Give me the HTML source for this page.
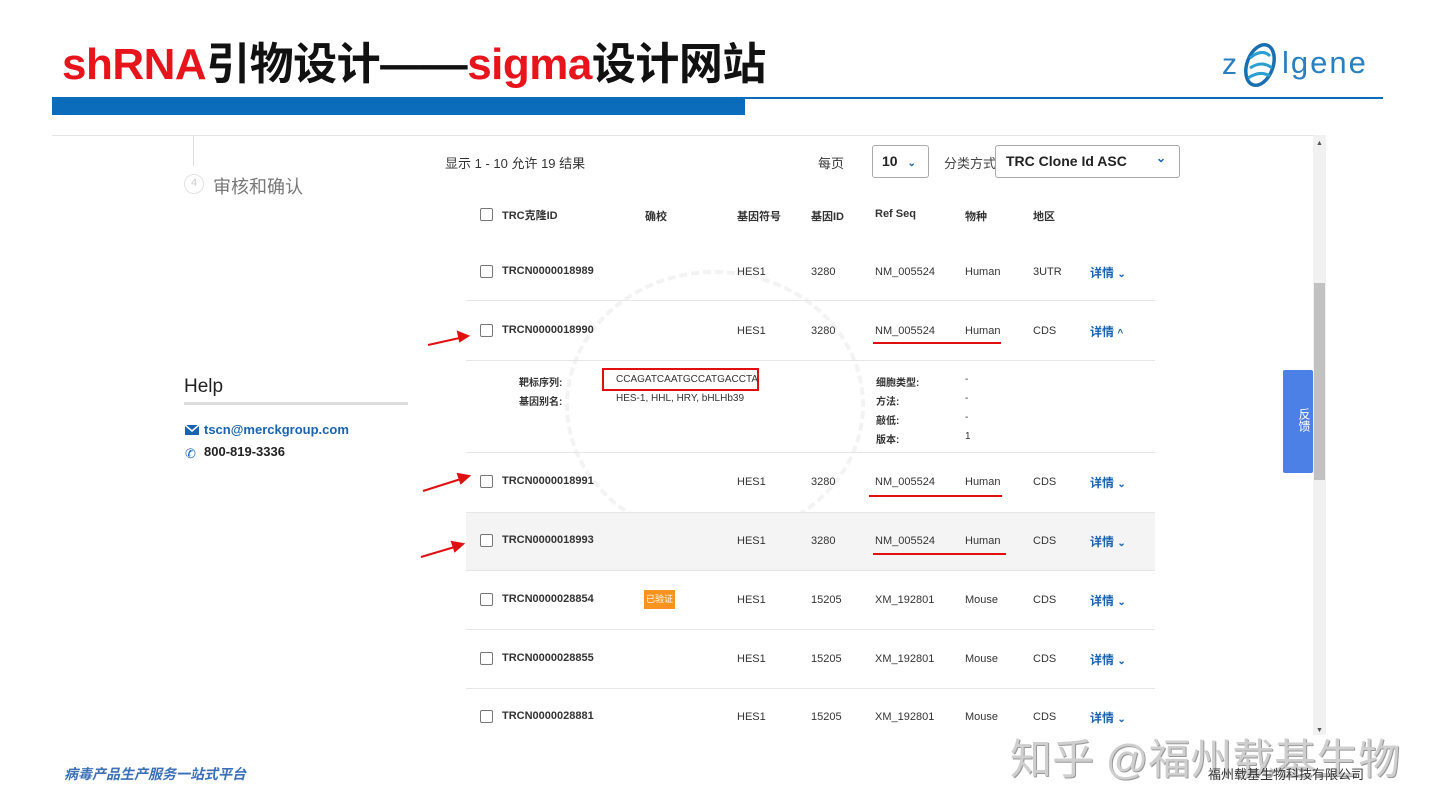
<!DOCTYPE html>
<html><head><meta charset="utf-8"><style>
*{margin:0;padding:0;box-sizing:border-box}
body{width:1440px;height:810px;background:#fff;position:relative;overflow:hidden;font-family:"Liberation Sans","Noto Sans CJK SC",sans-serif;color:#222}
.a{position:absolute;white-space:nowrap}
.t{font-size:11px;color:#333}
.b{font-weight:bold}
.cb{position:absolute;width:13px;height:13px;border:1.5px solid #777;border-radius:2px;background:#fff}
.ln{position:absolute;left:466px;width:689px;height:1px;background:#e6e6e6}
.det{color:#1a63b0;font-weight:bold;font-size:12px}
.red{position:absolute;height:2px;background:#e01010}
</style></head><body>
<div class="a" style="left:565px;top:270px;width:300px;height:270px;border:4px dashed #f3f3f3;border-radius:50%"></div>
<div class="a b" style="left:62px;top:38px;font-size:44px;letter-spacing:-0.5px;line-height:54px"><span style="color:#e8141c">shRNA</span><span style="color:#111">引物设计——</span><span style="color:#e8141c">sigma</span><span style="color:#111">设计网站</span></div>
<div class="a" style="left:1222px;top:47px;font-size:30px;color:#2a7fc1;line-height:36px">z</div>
<div class="a" style="left:1282px;top:45px;font-size:31px;color:#2a7fc1;letter-spacing:2px;line-height:36px">lgene</div>
<svg class="a" style="left:1240px;top:40px" width="44" height="50" viewBox="0 0 44 50"><ellipse cx="20" cy="25" rx="13" ry="21" fill="none" stroke="#1a6fb0" stroke-width="3.5" transform="rotate(20 20 25)"/><path d="M10 18 Q22 8 30 16 M10 28 Q22 20 32 28 M8 38 Q20 30 30 36" fill="none" stroke="#2a9fd0" stroke-width="3"/></svg>
<div class="a" style="left:52px;top:97px;width:693px;height:18px;background:#0a6cbb"></div>
<div class="a" style="left:745px;top:97px;width:638px;height:2px;background:#0a6cbb"></div>
<div class="a" style="left:52px;top:135px;width:1274px;height:1px;background:#e5e5e5"></div>
<div class="a" style="left:1313px;top:135px;width:13px;height:600px;background:#f1f1f1"></div>
<div class="a" style="left:1314px;top:283px;width:11px;height:197px;background:#c1c1c1"></div>
<div class="a" style="left:1316px;top:140px;font-size:7px;color:#555">▲</div>
<div class="a" style="left:1316px;top:727px;font-size:7px;color:#555">▼</div>
<div class="a" style="left:193px;top:136px;width:1px;height:30px;background:#ddd"></div>
<div class="a" style="left:184px;top:174px;width:20px;height:20px;border:1.5px solid #e2e2e2;border-radius:50%;font-size:11px;color:#ccc;text-align:center;line-height:17px">4</div>
<div class="a" style="left:213px;top:173px;font-size:18px;color:#777">审核和确认</div>
<div class="a" style="left:184px;top:376px;font-size:19px;color:#222">Help</div>
<div class="a" style="left:184px;top:402px;width:224px;height:3px;background:#ddd"></div>
<div class="a" style="left:185px;top:425px;width:14px;height:10px;background:#1a63b0"></div>
<svg class="a" style="left:185px;top:425px" width="14" height="10"><path d="M0 0 L7 6 L14 0" fill="none" stroke="#fff" stroke-width="1.5"/></svg>
<div class="a b" style="left:204px;top:422px;font-size:13px;color:#1a63b0">tscn@merckgroup.com</div>
<div class="a" style="left:185px;top:446px;font-size:13px;color:#1a63b0">✆</div>
<div class="a b" style="left:204px;top:444px;font-size:13px;color:#222">800-819-3336</div>
<div class="a" style="left:445px;top:153px;font-size:13px;color:#333">显示 1 - 10 允许 19 结果</div>
<div class="a" style="left:818px;top:153px;font-size:13px;color:#333">每页</div>
<div class="a" style="left:872px;top:145px;width:57px;height:33px;border:1px solid #aaa;border-radius:3px;font-size:14px;font-weight:bold;padding:7px 0 0 9px">10 <span style="color:#1a63b0;font-size:10px;margin-left:6px">⌄</span></div>
<div class="a" style="left:944px;top:153px;font-size:13px;color:#444">分类方式</div>
<div class="a" style="left:995px;top:145px;width:185px;height:33px;border:1px solid #aaa;border-radius:3px;font-size:14px;font-weight:bold;padding:7px 0 0 10px">TRC Clone Id ASC<span style="position:absolute;left:160px;top:5px;color:#1a63b0;font-size:12px">⌄</span></div>

<div class="cb" style="left:480px;top:208px"></div>
<div class="a t b" style="left:502px;top:207px">TRC克隆ID</div>
<div class="a t b" style="left:645px;top:208px">确校</div>
<div class="a t b" style="left:737px;top:208px">基因符号</div>
<div class="a t b" style="left:811px;top:208px">基因ID</div>
<div class="a t b" style="left:875px;top:208px">Ref Seq</div>
<div class="a t b" style="left:965px;top:208px">物种</div>
<div class="a t b" style="left:1033px;top:208px">地区</div>

<div class="ln" style="top:300px"></div><div class="ln" style="top:360px"></div><div class="ln" style="top:452px"></div><div class="ln" style="top:512px"></div><div class="ln" style="top:570px"></div><div class="ln" style="top:629px"></div><div class="ln" style="top:688px"></div>
<div class="a" style="left:466px;top:513px;width:689px;height:57px;background:#f4f4f4"></div>

<div class="cb" style="left:480px;top:265px"></div><div class="a t b" style="left:502px;top:265px">TRCN0000018989</div><div class="a t" style="left:737px;top:266px">HES1</div><div class="a t" style="left:811px;top:266px">3280</div><div class="a t" style="left:875px;top:266px">NM_005524</div><div class="a t" style="left:965px;top:266px">Human</div><div class="a t" style="left:1033px;top:266px">3UTR</div><div class="a det" style="left:1090px;top:264px">详情 <span style="font-size:10px">⌄</span></div>

<div class="cb" style="left:480px;top:324px"></div><div class="a t b" style="left:502px;top:324px">TRCN0000018990</div><div class="a t" style="left:737px;top:325px">HES1</div><div class="a t" style="left:811px;top:325px">3280</div><div class="a t" style="left:875px;top:325px">NM_005524</div><div class="a t" style="left:965px;top:325px">Human</div><div class="a t" style="left:1033px;top:325px">CDS</div><div class="a det" style="left:1090px;top:323px">详情 <span style="font-size:10px">^</span></div>
<div class="red" style="left:873px;top:342px;width:128px"></div>

<div class="a t b" style="left:519px;top:374px;font-size:10px">靶标序列:</div>
<div class="a t b" style="left:519px;top:393px;font-size:10px">基因别名:</div>
<div class="a" style="left:602px;top:368px;width:157px;height:23px;border:2px solid #e01010"></div>
<div class="a t" style="left:616px;top:374px;font-size:10px">CCAGATCAATGCCATGACCTA</div>
<div class="a t" style="left:616px;top:393px;font-size:10px">HES-1, HHL, HRY, bHLHb39</div>
<div class="a t b" style="left:876px;top:374px;font-size:10px">细胞类型:</div>
<div class="a t b" style="left:876px;top:393px;font-size:10px">方法:</div>
<div class="a t b" style="left:876px;top:412px;font-size:10px">敲低:</div>
<div class="a t b" style="left:876px;top:431px;font-size:10px">版本:</div>
<div class="a t" style="left:965px;top:374px;font-size:10px">-</div><div class="a t" style="left:965px;top:393px;font-size:10px">-</div><div class="a t" style="left:965px;top:412px;font-size:10px">-</div><div class="a t" style="left:965px;top:431px;font-size:10px">1</div>

<div class="cb" style="left:480px;top:475px"></div><div class="a t b" style="left:502px;top:475px">TRCN0000018991</div><div class="a t" style="left:737px;top:476px">HES1</div><div class="a t" style="left:811px;top:476px">3280</div><div class="a t" style="left:875px;top:476px">NM_005524</div><div class="a t" style="left:965px;top:476px">Human</div><div class="a t" style="left:1033px;top:476px">CDS</div><div class="a det" style="left:1090px;top:474px">详情 <span style="font-size:10px">⌄</span></div>
<div class="red" style="left:869px;top:495px;width:133px"></div>

<div class="cb" style="left:480px;top:534px"></div><div class="a t b" style="left:502px;top:534px">TRCN0000018993</div><div class="a t" style="left:737px;top:535px">HES1</div><div class="a t" style="left:811px;top:535px">3280</div><div class="a t" style="left:875px;top:535px">NM_005524</div><div class="a t" style="left:965px;top:535px">Human</div><div class="a t" style="left:1033px;top:535px">CDS</div><div class="a det" style="left:1090px;top:533px">详情 <span style="font-size:10px">⌄</span></div>
<div class="red" style="left:873px;top:553px;width:133px"></div>

<div class="cb" style="left:480px;top:593px"></div><div class="a t b" style="left:502px;top:593px">TRCN0000028854</div><div class="a" style="left:644px;top:590px;width:31px;height:19px;background:#f7931e;color:#fff;font-size:9px;text-align:center;line-height:19px">已验证</div><div class="a t" style="left:737px;top:594px">HES1</div><div class="a t" style="left:811px;top:594px">15205</div><div class="a t" style="left:875px;top:594px">XM_192801</div><div class="a t" style="left:965px;top:594px">Mouse</div><div class="a t" style="left:1033px;top:594px">CDS</div><div class="a det" style="left:1090px;top:592px">详情 <span style="font-size:10px">⌄</span></div>

<div class="cb" style="left:480px;top:652px"></div><div class="a t b" style="left:502px;top:652px">TRCN0000028855</div><div class="a t" style="left:737px;top:653px">HES1</div><div class="a t" style="left:811px;top:653px">15205</div><div class="a t" style="left:875px;top:653px">XM_192801</div><div class="a t" style="left:965px;top:653px">Mouse</div><div class="a t" style="left:1033px;top:653px">CDS</div><div class="a det" style="left:1090px;top:651px">详情 <span style="font-size:10px">⌄</span></div>

<div class="cb" style="left:480px;top:710px"></div><div class="a t b" style="left:502px;top:710px">TRCN0000028881</div><div class="a t" style="left:737px;top:711px">HES1</div><div class="a t" style="left:811px;top:711px">15205</div><div class="a t" style="left:875px;top:711px">XM_192801</div><div class="a t" style="left:965px;top:711px">Mouse</div><div class="a t" style="left:1033px;top:711px">CDS</div><div class="a det" style="left:1090px;top:709px">详情 <span style="font-size:10px">⌄</span></div>

<svg class="a" style="left:420px;top:325px" width="60" height="240"><g stroke="#e01010" stroke-width="2" fill="#e01010"><line x1="8" y1="20" x2="44" y2="12"/><path d="M48 11 L38 7 L40 16 Z"/><line x1="3" y1="166" x2="44" y2="153"/><path d="M49 151 L38 149 L41 158 Z"/><line x1="1" y1="232" x2="38" y2="221"/><path d="M43 219 L32 217 L35 226 Z"/></g></svg>

<div class="a" style="left:1283px;top:370px;width:30px;height:103px;background:#4d80e6;border-radius:2px;color:#fff;font-size:12px;writing-mode:vertical-rl;padding:38px 0 0 7px">反馈</div>

<div class="a b" style="left:64px;top:764px;font-size:14px;color:#3b6fb8;font-style:italic">病毒产品生产服务一站式平台</div>
<div class="a" style="left:1010px;top:726px;font-size:42px;color:#cfcfcf;text-shadow:1px 1px 0 #999">知乎 @福州载基生物</div>
<div class="a" style="left:1208px;top:764px;font-size:13px;color:#333">福州载基生物科技有限公司</div>
</body></html>
